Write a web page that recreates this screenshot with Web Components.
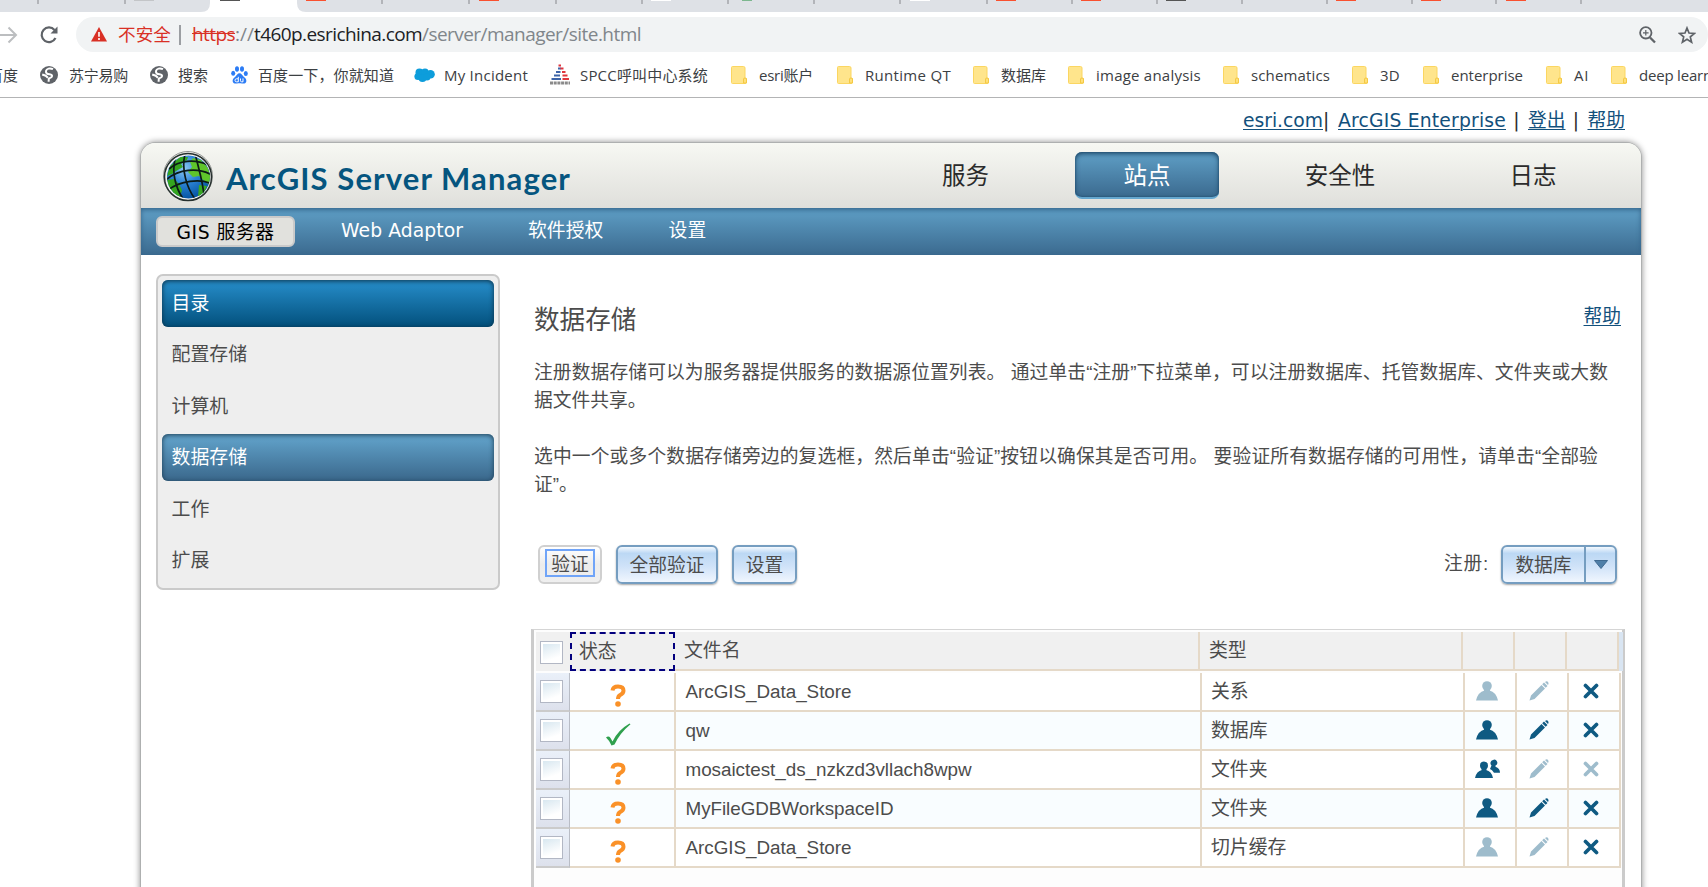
<!DOCTYPE html>
<html lang="zh">
<head>
<meta charset="UTF-8">
<title>ArcGIS Server Manager</title>
<style>
    body {
        margin: 0;
        width: 1708px;
        height: 887px;
        overflow: hidden;
        background: #fff;
        color: #4c4c4c;
        font-family: "Liberation Sans", "Noto Sans CJK SC", sans-serif;
        font-size: 18.75px;
    }
</style>
</head>
<body>
<browser-chrome></browser-chrome>
<manager-page></manager-page>

<script>
// Shared helper: attach an open shadow root with markup
function render(el, html) {
    el.attachShadow({ mode: 'open' }).innerHTML = html;
}

// Single line of text, tracked so that it fills the given width
class FitText extends HTMLElement {
    connectedCallback() {
        render(this, `
            <style>
                :host { display: inline-block; white-space: nowrap; flex: none; text-decoration: inherit; }
                span { white-space: pre; }
            </style>
            <span><slot></slot></span>
        `);
        const target = parseFloat(this.getAttribute('w'));
        const span = this.shadowRoot.querySelector('span');
        const natural = span.getBoundingClientRect().width;
        const count = this.textContent.length;
        if (target && natural) {
            span.style.letterSpacing = `${(target - natural) / count}px`;
        }
    }
}

const ICONS = {
    globe: `<svg width="18" height="18" viewBox="0 0 18 18"><circle cx="9" cy="9" r="9" fill="#5f6368"/><path d="M13 3.200C10 1.700 6.500 2.500 6 5c-.4 2.300 1.200 3 3.500 3.200 2.300.2 3 1.300 2.300 2.600-.7 1.200-2.300 1-3 2l-.2 2.900M2.200 8.500l3.500 1.200 2.200 2.100" fill="none" stroke="#fff" stroke-width="2"/></svg>`,
    paw: `<svg width="17" height="18" viewBox="0 0 17 18" fill="#2c7cf5"><ellipse cx="2.200" cy="7.300" rx="2" ry="2.500"/><ellipse cx="6" cy="3" rx="2" ry="2.800"/><ellipse cx="11" cy="3" rx="2" ry="2.800"/><ellipse cx="14.800" cy="7.500" rx="2" ry="2.500"/><path d="M8.500 7.300c2 0 2.700 2 4.200 3.500 1.700 1.500 3 2.500 2.600 4.600-.5 2.400-2.700 2.300-4.300 2.100-1.700-.2-3.300-.2-5 0-1.700.2-3.800.2-4.300-2.100-.4-2.100 1-3.100 2.600-4.600 1.500-1.500 2.200-3.500 4.200-3.500z"/><path d="M7.300 10.800v5H5.500a1.300 1.300 0 0 1 0-3h1.600M9.500 12.500v2.200q0 1.100 1.100 1.100h1.400v-3.400" fill="none" stroke="#fff" stroke-width="1"/></svg>`,
    cloud: `<svg width="21" height="14" viewBox="0 0 21 14" fill="#0d9ddb"><circle cx="5.500" cy="4.500" r="4"/><circle cx="11" cy="4.300" r="3.800"/><circle cx="16.500" cy="6.300" r="4.300"/><circle cx="4" cy="8.500" r="3.600"/><circle cx="8.500" cy="10" r="4"/><circle cx="13" cy="9" r="3.500"/></svg>`,
    tower: `<svg width="20" height="21" viewBox="1 0 20 21"><path d="M9 4.500h3M7 8h4.500M5 11.500h6M2.500 15h9.500" stroke="#3d64a8" stroke-width="2.200"/><path d="M9.500 1.500h2.500M11.500 4.500h3M13 8h3.500M13.500 11.500h5M13.500 15h6.500" stroke="#e0343c" stroke-width="2.200"/><path d="M1 19h20" stroke="#8a8a8a" stroke-width="3" stroke-dasharray="3 .7"/></svg>`,
    folder: `<svg width="16" height="18" viewBox="0 0 16 18"><path d="M1.500.5h11q1.500 0 1.500 1.500v10.500h1.500v3.500q0 1.500-1.500 1.500H1.500q-1 0-1-1V1.500q0-1 1-1z" fill="#ffe58c" stroke="#fbd661"/><path d="M12.500 17v-4q0-1 1.500-1t1.500 1v4z" fill="#ffe07a" stroke="#f4c945"/></svg>`,
    none: ''
};

class BookmarkItem extends HTMLElement {
    connectedCallback() {
        render(this, `
            <style>
                :host {
                    display: flex;
                    align-items: center;
                    flex: none;
                    box-sizing: border-box;
                    width: ${this.getAttribute('w')}px;
                    font: 15px "Open Sans", "Noto Sans CJK SC", sans-serif;
                    color: #3c4043;
                }
                .icon { width: ${this.getAttribute('iw')}px; flex: none; display: flex; }
            </style>
            <span class="icon">${ICONS[this.getAttribute('icon')]}</span>
            <fit-text w="${this.getAttribute('tw')}">${this.getAttribute('label')}</fit-text>
        `);
    }
}

// Bookmarks: icon, label, item width, icon cell width, label width
const bookmarks = [
    ['none', '百度', 52, 0, 30],
    ['globe', '苏宁易购', 110, 29, 59],
    ['globe', '搜索', 81, 28, 30],
    ['paw', '百度一下，你就知道', 183, 27, 136],
    ['cloud', 'My Incident', 136, 30, 84],
    ['tower', 'SPCC呼叫中心系统', 181, 30, 128],
    ['folder', 'esri账户', 106, 28, 54],
    ['folder', 'Runtime QT', 136, 28, 86],
    ['folder', '数据库', 95, 28, 45],
    ['folder', 'image analysis', 155, 28, 105],
    ['folder', 'schematics', 129, 28, 79],
    ['folder', '3D', 71, 28, 20],
    ['folder', 'enterprise', 123, 28, 72],
    ['folder', 'AI', 65, 28, 15],
    ['folder', 'deep learn', 97, 28, 73]
];

// Tab strip pieces: separator x, then the favicon that shows next to it
const tabs = [
    [38], [125, 134, '#c3c5c8', 20], [382], [469, 479, '#f9502f', 20], [556], [642, 651, '#fff', 20],
    [728, 742, '#7db78f', 10], [814], [900, 910, '#fff', 20], [987, 996, '#f9502f', 20],
    [1072, 1081, '#f9502f', 20], [1157, 1166, '#555', 20], [1242], [1327, 1336, '#f9502f', 20],
    [1412, 1421, '#f9502f', 20], [1496, 1506, '#f9502f', 20], [1581]
];

class TabStrip extends HTMLElement {
    connectedCallback() {
        render(this, `
            <style>
                :host { display: block; height: 12px; }
                svg { display: block; }
            </style>
            <svg width="1708" height="12">
                <rect width="1708" height="12" fill="#dee1e6"/>
                <path d="M201 12q9 0 9-9V0h87v3q0 9 9 9z" fill="#fff"/>
                <rect x="220" width="20" height="1" fill="#555"/>
                <rect x="306" width="20" height="1" fill="#f9502f"/>
                ${tabs.map(([x, fx, color, w]) => `
                    <rect x="${x - 0.5}" width="1" height="4" fill="#85888c"/>
                    ${fx ? `<rect x="${fx}" width="${w}" height="1" fill="${color}"/>` : ''}
                `).join('')}
            </svg>
        `);
    }
}

class BrowserChrome extends HTMLElement {
    connectedCallback() {
        render(this, `
            <style>
                :host {
                    display: block;
                    height: 98px;
                    box-sizing: border-box;
                    border-bottom: 1px solid #b3b4b5;
                    background: #fff;
                    overflow: hidden;
                }
                .toolbar {
                    display: flex;
                    align-items: center;
                    height: 35px;
                    margin-top: 5px;
                }
                .arrow { flex: none; width: 39px; }
                .reload { flex: none; width: 37px; }
                svg { display: block; }
                .omnibox {
                    flex: 1;
                    display: flex;
                    align-items: center;
                    height: 35px;
                    border-radius: 18px;
                    background: #f1f3f4;
                    box-sizing: border-box;
                    padding: 0 12px 0 15px;
                    font: 19px/30px "Open Sans", "Noto Sans CJK SC", sans-serif;
                    color: #80868b;
                }
                .omnibox fit-text { margin-bottom: 2px; }
                .unsafe { font-size: 17.600px; color: #d93025; margin-left: 11px; }
                .bar { width: 2px; height: 20px; background: #9b9ea2; margin: 0 11px 0 8px; }
                .https { color: #d93025; text-decoration: line-through; }
                .host { color: #202124; }
                .zoom { margin-left: auto; margin-right: 22px; }
                .bookmarks {
                    display: flex;
                    align-items: center;
                    height: 45px;
                    margin-left: -12px;
                }
            </style>
            <tab-strip></tab-strip>
            <div class="toolbar">
                <svg class="arrow" width="39" height="20" viewBox="0 0 39 20" fill="none" stroke="#bcbec0" stroke-width="2"><path d="M0 10h16M8.500 2.500l7.500 7.500-7.500 7.500"/></svg>
                <svg class="reload" width="37" height="20" viewBox="0 0 37 20"><path d="M16.500 13a7.300 7.300 0 1 1-1-8" fill="none" stroke="#5f6368" stroke-width="2.200"/><path d="M18.500 1.500v7h-7z" fill="#5f6368"/></svg>
                <div class="omnibox">
                    <svg width="16" height="15" viewBox="0 0 16 15"><path d="M8 0l8 14.500H0z" fill="#d93025"/><path d="M8 5v4.800M8 11v2" stroke="#fff" stroke-width="1.600"/></svg>
                    <fit-text class="unsafe" w="53">不安全</fit-text>
                    <span class="bar"></span>
                    <fit-text class="https" w="43">https</fit-text><fit-text w="19">://</fit-text><fit-text class="host" w="168">t460p.esrichina.com</fit-text><fit-text w="219">/server/manager/site.html</fit-text>
                    <svg class="zoom" width="17" height="18" viewBox="0 0 17 18" fill="none" stroke="#5f6368"><circle cx="6.800" cy="6.800" r="5.700" stroke-width="1.800"/><path d="M11 11.500l5 5" stroke-width="2.300"/><path d="M6.800 4v5.600M4 6.800h5.600" stroke-width="1.200"/></svg>
                    <svg width="18" height="18" viewBox="0 0 18 18"><path d="M9 2l2 5 5.400.4-4.100 3.500 1.300 5.300L9 13.300l-4.600 2.900 1.300-5.300L1.600 7.400 7 7z" fill="none" stroke="#5f6368" stroke-width="1.700"/></svg>
                </div>
            </div>
            <div class="bookmarks">
                ${bookmarks.map(([icon, label, w, iw, tw]) => `
                    <bookmark-item icon="${icon}" label="${label}" w="${w}" iw="${iw}" tw="${tw}"></bookmark-item>
                `).join('')}
            </div>
        `);
    }
}

class TopLinks extends HTMLElement {
    connectedCallback() {
        render(this, `
            <style>
                :host {
                    display: flex;
                    justify-content: flex-end;
                    align-items: center;
                    height: 45px;
                    padding: 1px 83px 0 0;
                    box-sizing: border-box;
                    font: 18.750px/44px "DejaVu Sans", "Noto Sans CJK SC", sans-serif;
                    color: #2d2d2d;
                }
                a { color: #12507c; text-decoration: underline; text-underline-offset: 2px; text-decoration-thickness: 1px; }
            </style>
            <a><fit-text w="80">esri.com</fit-text></a><fit-text w="15">| </fit-text>
            <a><fit-text w="168">ArcGIS Enterprise</fit-text></a><fit-text w="22"> | </fit-text>
            <a><fit-text w="37.500">登出</fit-text></a><fit-text w="22"> | </fit-text>
            <a><fit-text w="37.500">帮助</fit-text></a>
        `);
    }
}

class GlobeLogo extends HTMLElement {
    connectedCallback() {
        render(this, `
            <style>:host, svg { display: block; }</style>
            <svg width="52" height="52" viewBox="0 0 52 52">
                <defs>
                    <radialGradient id="sea" cx=".4" cy=".3" r=".7">
                        <stop offset="0" stop-color="#8cc8f2"/>
                        <stop offset=".5" stop-color="#2b83d4"/>
                        <stop offset="1" stop-color="#0755a4"/>
                    </radialGradient>
                    <clipPath id="disc"><circle cx="26.500" cy="27" r="21.500"/></clipPath>
                </defs>
                <circle cx="26" cy="26" r="24.500" fill="#f4f4f2" stroke="#8f918e" stroke-width="1"/>
                <circle cx="26.500" cy="27" r="21.500" fill="url(#sea)"/>
                <g clip-path="url(#disc)">
                    <path d="M8 16l10-9 8 0-1 3-6 4 2 3-7 4-4 3-5 2z" fill="#35a51f"/>
                    <path d="M5 30l7-1 5 5 3 6-2 8-9-5z" fill="#35a51f"/>
                    <path d="M31 8l8 2 7 8 3 11-3 5-5-4-4-4-6 1-5-5 4-5-2-5z" fill="#5fc52b"/>
                    <path d="M37 35l8 1-3 7-6 4z" fill="#39a823"/>
                    <g fill="none" stroke="#0c1b18" stroke-width="1.700">
                        <path d="M7 19C17 10 33 9 46 15M4 30C16 19 36 17 50 25M6 40C18 31 38 28 50 34"/>
                        <path d="M14 6C9 20 13 38 22 50M23 4C19 20 25 38 33 49M33 3C36 17 41 31 42 46"/>
                    </g>
                </g>
                <circle cx="26" cy="27" r="23.500" fill="none" stroke="#26302e" stroke-width="1.500"/>
            </svg>
        `);
    }
}

class MainHeader extends HTMLElement {
    connectedCallback() {
        render(this, `
            <style>
                :host {
                    display: flex;
                    align-items: center;
                    height: 65px;
                    background: linear-gradient(#f7f8f3, #dfdfdb);
                    border-radius: 14px 14px 0 0;
                    color: #2b2b2b;
                    font-size: 23.500px;
                }
                globe-logo { margin: 1px 0 0 20.500px; flex: none; }
                .name {
                    font: bold 31px/40px Lato, sans-serif;
                    color: #05557f;
                    margin: 4px 0 0 12.500px;
                    width: 686px;
                }
                nav { display: flex; align-items: center; margin-top: -1px; }
                nav span {
                    display: flex;
                    justify-content: center;
                    align-items: center;
                    box-sizing: border-box;
                    height: 47px;
                    width: 144px;
                    margin-right: 49px;
                    padding-bottom: 2px;
                }
                nav .on {
                    color: #fff;
                    border-radius: 7px;
                    border-bottom: 2px solid #65a7cf;
                    padding-bottom: 0;
                    background: linear-gradient(#5f9fc6, #3b6a8f);
                    box-shadow: inset 0 2px 5px #1f4a6b, inset 0 0 2px #1f4a6b;
                }
            </style>
            <globe-logo></globe-logo>
            <div class="name"><fit-text w="345">ArcGIS Server Manager</fit-text></div>
            <nav>
                <span style="width:107px;margin:0 56px 0 0">服务</span>
                <span class="on">站点</span>
                <span>安全性</span>
                <span style="margin:0">日志</span>
            </nav>
        `);
    }
}

class SubNav extends HTMLElement {
    connectedCallback() {
        render(this, `
            <style>
                :host {
                    display: flex;
                    align-items: flex-start;
                    height: 47px;
                    box-sizing: border-box;
                    padding: 8px 0 0 15px;
                    background: linear-gradient(#5f9fc6, #3b6a8f);
                    box-shadow: inset 0 2px 5px #35668b;
                    font: 18.750px/29px "DejaVu Sans", "Noto Sans CJK SC", sans-serif;
                    color: #fff;
                }
                .on {
                    box-sizing: border-box;
                    width: 139px;
                    height: 31px;
                    border: 2px solid #cacaca;
                    border-radius: 6px;
                    background: #e1e1dd;
                    color: #000;
                    text-align: center;
                    line-height: 30px;
                    margin-right: 46px;
                }
                .web, .lic { margin-right: 65px; }
            </style>
            <div class="on"><fit-text w="98">GIS 服务器</fit-text></div>
            <fit-text class="web" w="122">Web Adaptor</fit-text>
            <fit-text class="lic" w="75.500">软件授权</fit-text>
            <fit-text w="38">设置</fit-text>
        `);
    }
}

class SideMenu extends HTMLElement {
    connectedCallback() {
        const items = ['目录', '配置存储', '计算机', '数据存储', '工作', '扩展'];
        render(this, `
            <style>
                :host {
                    display: flex;
                    flex-direction: column;
                    gap: 4.400px;
                    box-sizing: border-box;
                    flex: none;
                    width: 344px;
                    height: 316px;
                    padding: 4px;
                    border: 2px solid #cacaca;
                    border-radius: 7px;
                    background: #eee;
                    font-size: 18.900px;
                }
                div {
                    box-sizing: border-box;
                    height: 47px;
                    line-height: 48.500px;
                    padding-left: 9.500px;
                    border-radius: 6px;
                }
                .top {
                    color: #fff;
                    line-height: 47px;
                    background: linear-gradient(#278ecb, #02507c);
                    box-shadow: inset 0 1px 5px #0b2e43;
                }
                .on {
                    color: #fff;
                    background: linear-gradient(#63a5cd, #3a678b);
                    box-shadow: inset 0 1px 5px #1c3b50;
                }
            </style>
            ${items.map((item, i) => `<div class="${i === 0 ? 'top' : i === 3 ? 'on' : ''}">${item}</div>`).join('')}
        `);
    }
}

class UiButton extends HTMLElement {
    connectedCallback() {
        render(this, `
            <style>
                :host {
                    display: flex;
                    box-sizing: border-box;
                    height: 39px;
                    border: 2px solid #759dc0;
                    border-radius: 6px;
                    background: linear-gradient(#f4f9fe 0, #bcd8f4 18%, #cfe2f8 55%, #f0f6fe 100%);
                    box-shadow: 0 1px 2px rgba(0,0,0,0.35);
                    line-height: 37px;
                }
                :host([focused]) {
                    border-color: #d0d0d0;
                    background: linear-gradient(#fff, #ececec 50%, #efefef);
                    box-shadow: none;
                }
                :host([focused]) span {
                    height: 24px;
                    line-height: 28px;
                    margin: 2px 5px 0;
                    border: 2px solid #70a4f8;
                }
                span { flex: 1; text-align: center; }
                .drop {
                    display: none;
                    width: 29px;
                    border-left: 2px solid #759dc0;
                    align-items: center;
                    justify-content: center;
                }
                :host([drop]) .drop { display: flex; }
            </style>
            <span><slot></slot></span>
            <div class="drop"><svg width="14" height="9" viewBox="0 0 14 9"><path d="M.5.500h13L7 8.500z" fill="#4f7fa8" stroke="#406a91"/></svg></div>
        `);
    }
}

const GRID_ICONS = {
    unknown: `<svg width="16" height="23" viewBox="0 0 16 23"><path d="M2.500 6.500Q3 2.500 8 2.500q5.500 0 5.500 4.200 0 2.600-3.300 4.300Q8 12.300 8 15" fill="none" stroke="#fa9128" stroke-width="4"/><circle cx="8" cy="20" r="2.800" fill="#fa9128"/></svg>`,
    ok: `<svg width="26" height="23" viewBox="0 0 26 23"><path d="M1 14.500q2.500-2 4.500.5l2 3.500Q13 7 24.500.500l1 .8Q15 10 9.500 21.500l-3 1Q4 17 1 14.500z" fill="#2fa04e"/></svg>`,
    user: `<svg width="22" height="20" viewBox="0 0 22 20" fill="#0f5a82"><circle cx="11" cy="5" r="4.800"/><path d="M8 7.500h6v3H8zM0 19.500Q2 11 8.500 9.500h5Q20 11 22 19.500z"/></svg>`,
    users: `<svg width="25" height="20" viewBox="0 0 25 20" fill="#0f5a82"><circle cx="9" cy="6.500" r="4"/><path d="M6.500 8.500h5v3h-5zM0 19q1.500-7 7-8h4q5.500 1 7 8zM18 1a3 3 0 0 1 2.500 5.500v1.200q4.500 1.500 4.500 6h-6q-2-3-4-3.700l1.500-3.500A3.200 3.200 0 0 1 18 1z"/></svg>`,
    pencil: `<svg width="20" height="20" viewBox="0 0 20 20" fill="#0f5a82"><path d="M.5 19.500L2 14.500 12.500 4l3.500 3.500L5.500 18zM13.200 3.300L15 1.500l3.500 3.500-1.800 1.800zM16 1q2-1.500 3 0t0 3z"/></svg>`,
    remove: `<svg width="16" height="16" viewBox="0 0 16 16"><path d="M2.500 2.500l11 11M13.500 2.500l-11 11" stroke="#0f5a82" stroke-width="3.700" stroke-linecap="round"/></svg>`
};

class CheckBox extends HTMLElement {
    connectedCallback() {
        render(this, `
            <style>
                :host {
                    display: block;
                    box-sizing: border-box;
                    width: 23px;
                    height: 23px;
                    border: 1.500px solid #b2b7c4;
                    background: linear-gradient(160deg, #d3e4ee, #fff 75%);
                    box-shadow: inset 0 0 0 2px #fff;
                }
            </style>
        `);
    }
}

class DataGrid extends HTMLElement {
    connectedCallback() {
        // status, name, name width, type, user icon, dimmed flags for user / pencil / remove
        const rows = [
            ['unknown', 'ArcGIS_Data_Store', 166, '关系', 'user', 1, 1, 0],
            ['ok', 'qw', 24, '数据库', 'user', 0, 0, 0],
            ['unknown', 'mosaictest_ds_nzkzd3vllach8wpw', 286, '文件夹', 'users', 0, 1, 1],
            ['unknown', 'MyFileGDBWorkspaceID', 208, '文件夹', 'user', 0, 0, 0],
            ['unknown', 'ArcGIS_Data_Store', 166, '切片缓存', 'user', 1, 1, 0]
        ];
        const action = (name, dim) => `<div class="cell act${dim ? ' dim' : ''}">${GRID_ICONS[name]}</div>`;
        render(this, `
            <style>
                :host {
                    display: block;
                    box-sizing: border-box;
                    width: 1094px;
                    height: 258px;
                    border: 3px solid #cbcbcb;
                    border-top: 1px solid #d5d5d5;
                    border-bottom: 0;
                    padding: 2px 1px 0 2px;
                    background: #fdfdfd;
                    font-size: 18.850px;
                }
                .head, .row { display: grid; }
                .head {
                    grid-template-columns: 34px 105px 525px 263px 52px 52px 52px 4px;
                    height: 39px;
                    background: #f0f0f0;
                    margin-bottom: 2px;
                }
                .row {
                    grid-template-columns: 34px 106px 526px 263px 52px 52px 52px;
                    width: 1085px;
                    height: 39px;
                    background: #fff;
                }
                .row.odd { background: #f9fdff; }
                .cell {
                    box-sizing: border-box;
                    border-right: 2px solid #e5d9c8;
                    border-bottom: 2px solid #e5d9c8;
                    padding-left: 9px;
                    line-height: 38px;
                    height: 39px;
                }
                .check {
                    display: flex;
                    align-items: center;
                    justify-content: center;
                    padding: 0 2px 0 0;
                }
                .head .check { border: 0; padding: 2px 3px 0 0; }
                .row .check {
                    border-right: 1px solid #b9bdc6;
                    border-bottom: 2px solid #cbcbcb;
                    background: linear-gradient(#eaf0f9, #dde1ec);
                }
                .head .state { border: 2px dashed #03007e; padding-left: 7px; line-height: 35px; }
                .row .name { padding-left: 9.500px; line-height: 37px; }
                .status { display: flex; align-items: center; justify-content: center; padding: 7px 9px 0 0; }
                .act { display: flex; align-items: center; justify-content: center; padding: 0 6px 1px 0; }
                .dim svg { opacity: 0.4; }
                .end { background: #d9e5f2; }
            </style>
            <div class="head">
                <div class="cell check"><check-box></check-box></div>
                <div class="cell state">状态</div>
                <div class="cell">文件名</div>
                <div class="cell">类型</div>
                <div class="cell"></div><div class="cell"></div><div class="cell"></div>
                <div class="end"></div>
            </div>
            ${rows.map(([status, name, w, type, icon, a, b, c], i) => `
                <div class="row ${i % 2 ? 'odd' : ''}">
                    <div class="cell check"><check-box></check-box></div>
                    <div class="cell status">${GRID_ICONS[status]}</div>
                    <div class="cell name"><fit-text w="${w}">${name}</fit-text></div>
                    <div class="cell">${type}</div>
                    ${action(icon, a)}${action('pencil', b)}${action('remove', c)}
                </div>
            `).join('')}
        `);
    }
}

class DataStorePanel extends HTMLElement {
    connectedCallback() {
        render(this, `
            <style>
                :host { display: block; width: 1094px; margin-left: 31px; }
                .title {
                    display: flex;
                    justify-content: space-between;
                    height: 85px;
                    padding: 27px 4px 0 3px;
                    box-sizing: border-box;
                }
                h1 { margin: 0; font-size: 25.600px; font-weight: 400; line-height: 38px; }
                a {
                    color: #12507c;
                    line-height: 31px;
                    text-decoration: underline;
                    text-underline-offset: 2px;
                    text-decoration-thickness: 1px;
                }
                .text { padding-left: 3px; line-height: 28px; height: 139px; white-space: nowrap; }
                .text fit-text { vertical-align: top; }
                .actions { display: flex; padding: 47px 8px 0 7px; height: 37px; }
                .label { margin: 0 12px 0 auto; line-height: 37px; }
                .verify { width: 64px; margin-right: 14px; }
                .all { width: 102px; margin-right: 14px; }
                .set { width: 65px; }
                .register { width: 116px; }
                data-grid { margin-top: 47px; }
            </style>
            <div class="title"><h1>数据存储</h1><a>帮助</a></div>
            <div class="text">
                <fit-text w="1074">注册数据存储可以为服务器提供服务的数据源位置列表。 通过单击“注册”下拉菜单，可以注册数据库、托管数据库、文件夹或大数</fit-text><br>
                据文件共享。<br><br>
                <fit-text w="1064">选中一个或多个数据存储旁边的复选框，然后单击“验证”按钮以确保其是否可用。 要验证所有数据存储的可用性，请单击“全部验</fit-text><br>
                证”。
            </div>
            <div class="actions">
                <ui-button class="verify" focused>验证</ui-button>
                <ui-button class="all">全部验证</ui-button>
                <ui-button class="set">设置</ui-button>
                <fit-text class="label" w="45">注册:</fit-text>
                <ui-button class="register" drop>数据库</ui-button>
            </div>
            <data-grid></data-grid>
        `);
    }
}

class ManagerPage extends HTMLElement {
    connectedCallback() {
        render(this, `
            <style>
                :host { display: block; height: 789px; overflow: hidden; }
                .panel {
                    width: 1500px;
                    height: 800px;
                    margin-left: 141px;
                    border-radius: 15px;
                    background: #fff;
                    box-shadow: 0 0 0 1px #aeb0b0, 0 0 6px 1px rgba(0,0,0,0.45);
                }
                .body { display: flex; align-items: flex-start; padding: 19px 0 0 15px; }
            </style>
            <top-links></top-links>
            <div class="panel">
                <main-header></main-header>
                <sub-nav></sub-nav>
                <div class="body">
                    <side-menu></side-menu>
                    <data-store-panel></data-store-panel>
                </div>
            </div>
        `);
    }
}

customElements.define('fit-text', FitText);
customElements.define('bookmark-item', BookmarkItem);
customElements.define('tab-strip', TabStrip);
customElements.define('browser-chrome', BrowserChrome);
customElements.define('top-links', TopLinks);
customElements.define('globe-logo', GlobeLogo);
customElements.define('main-header', MainHeader);
customElements.define('sub-nav', SubNav);
customElements.define('side-menu', SideMenu);
customElements.define('ui-button', UiButton);
customElements.define('check-box', CheckBox);
customElements.define('data-grid', DataGrid);
customElements.define('data-store-panel', DataStorePanel);
customElements.define('manager-page', ManagerPage);
</script>
</body>
</html>
